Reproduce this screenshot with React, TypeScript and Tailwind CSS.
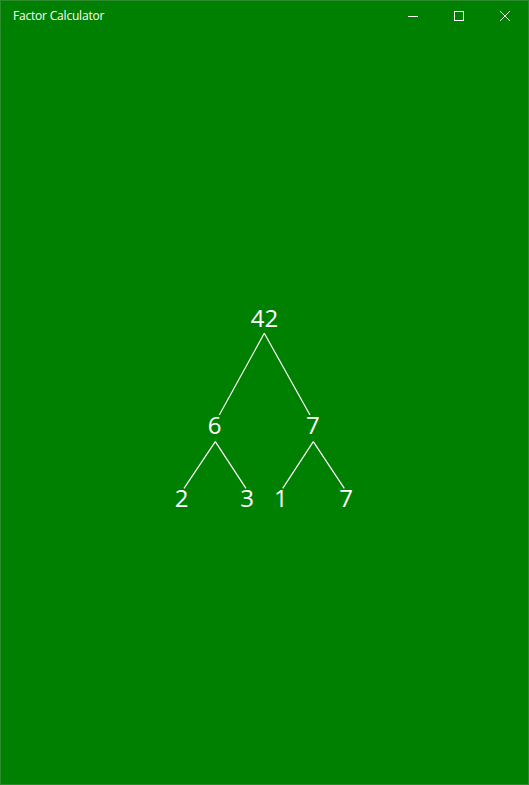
import React from 'react';

type TreeNode = { label: string; x: number; y: number };

// node centres / label tops inside the tree box (px)
const nodes: TreeNode[] = [
  { label: '42', x: 95.5, y: 3 },
  { label: '6', x: 45.7, y: 109.5 },
  { label: '7', x: 143.8, y: 109.5 },
  { label: '2', x: 12.5, y: 183 },
  { label: '3', x: 78.2, y: 183 },
  { label: '1', x: 111.8, y: 183 },
  { label: '7', x: 177.2, y: 183 },
];

const edges: [number, number, number, number][] = [
  [95.3, 30.3, 50.3, 112],
  [95.3, 30.3, 141, 112],
  [46.3, 138.7, 15, 185.3],
  [46.3, 138.7, 77, 185.3],
  [144.3, 138.7, 113.7, 185.3],
  [144.3, 138.7, 175.3, 185.3],
];

const CaptionButton: React.FC<{ children: React.ReactNode }> = ({ children }) => (
  <div className="flex h-full w-[46px] items-center justify-center">{children}</div>
);

const FactorTree: React.FC = () => (
  <div className="relative h-[209px] w-[191px]">
    <svg className="absolute inset-0" width={191} height={209} viewBox="0 0 191 209">
      {edges.map(([x1, y1, x2, y2], i) => (
        <line key={i} x1={x1} y1={y1} x2={x2} y2={y2} stroke="#ffffff" strokeWidth={1.2} />
      ))}
    </svg>
    {nodes.map((n, i) => (
      <div
        key={i}
        className="absolute w-[40px] text-center text-[24px] leading-[24px] text-white"
        style={{ left: n.x - 20, top: n.y }}
      >
        {n.label}
      </div>
    ))}
  </div>
);

export default function App() {
  return (
    <div
      className="flex h-[785px] w-[529px] flex-col border border-[#2b8a2b] bg-[#008000] text-white"
      style={{ fontFamily: '"Open Sans", "Noto Sans", sans-serif' }}
    >
      <div className="flex h-[30px] shrink-0 items-center">
        <span className="pl-[12px] text-[12px] tracking-[-0.2px]">Factor Calculator</span>
        <div className="ml-auto flex h-full">
          <CaptionButton>
            <svg width="10" height="10" viewBox="0 0 10 10">
              <line x1="0" y1="5.5" x2="10" y2="5.5" stroke="#ffffff" strokeWidth={1} />
            </svg>
          </CaptionButton>
          <CaptionButton>
            <svg width="10" height="10" viewBox="0 0 10 10">
              <rect x="0.5" y="0.5" width="9" height="9" fill="none" stroke="#ffffff" strokeWidth={1} />
            </svg>
          </CaptionButton>
          <CaptionButton>
            <svg width="10" height="10" viewBox="0 0 10 10">
              <path d="M0 0L10 10M10 0L0 10" stroke="#ffffff" strokeWidth={1} />
            </svg>
          </CaptionButton>
        </div>
      </div>
      <div className="flex flex-1 items-center justify-center">
        <FactorTree />
      </div>
    </div>
  );
}
